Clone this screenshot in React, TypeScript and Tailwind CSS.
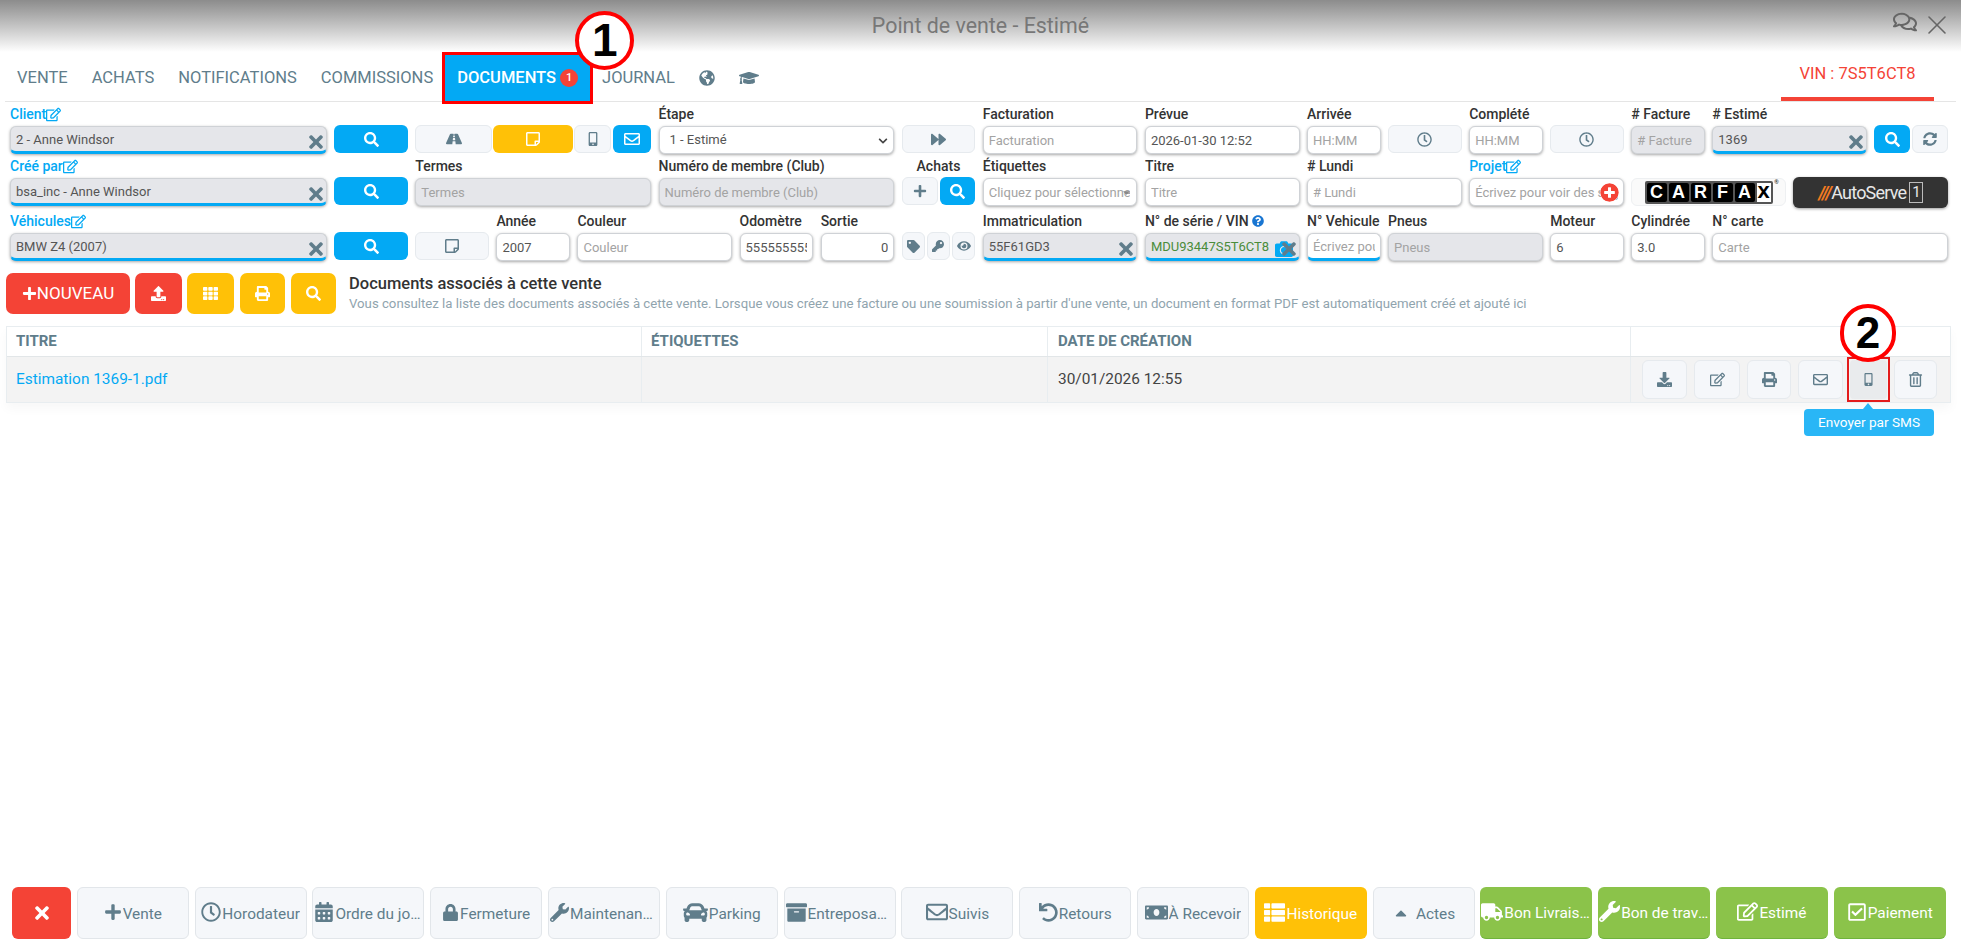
import type { ReactNode } from 'react';
import { X } from 'lucide-react';
import {
    FaArchive, FaCalendarAlt, FaCamera, FaCar, FaCaretDown, FaCaretUp, FaChevronDown, FaDownload, FaEye, FaForward,
    FaGlobeAmericas, FaGraduationCap, FaKey, FaLock, FaMobileAlt, FaMoneyBill, FaPlus, FaPlusCircle,
    FaPrint, FaQuestionCircle, FaRegCheckSquare, FaRegClock, FaRegComments, FaRegEdit, FaRegEnvelope,
    FaRegStickyNote, FaRegTrashAlt, FaRoad, FaSearch, FaSyncAlt, FaTag, FaTh, FaThList, FaTimes, FaTruck, FaUndo,
    FaUpload, FaWrench,
} from 'react-icons/fa';

const ghostBtn = 'flex items-center justify-center rounded-[6px] border border-[#e6eaee] bg-[#f5f7fa] text-[#607d8b]';
const blueBtn = 'flex items-center justify-center rounded-[6px] bg-[#03a9f4] text-white';
const inputBase = 'block h-[28px] w-full rounded-[6px] border border-[#cfd2d6] px-[5px] text-[13px] shadow-[0_1px_3px_rgba(0,0,0,0.35)] outline-none placeholder:text-[#a3a3a3]';

function Label({ children, link }: { children?: ReactNode, link?: boolean }) {
    if (link) {
        return (
            <div className="flex h-[24px] items-center text-[14px] font-medium text-[#03a9f4]">
                {children}
                <FaRegEdit size={15} />
            </div>
        );
    }
    return <div className="flex h-[24px] items-center whitespace-nowrap text-[14px] font-medium text-[#333]">{children}</div>;
}

function Field({ span, label, link, value, placeholder, disabled, picker, align }: {
    span: string,
    label?: ReactNode,
    link?: boolean,
    value?: string,
    placeholder?: string,
    disabled?: boolean,
    picker?: boolean,
    align?: string,
}) {
    const bg = disabled || picker ? 'bg-[#e5e6ea]' : 'bg-white';
    return (
        <div className={span}>
            <Label link={link}>{label}</Label>
            <div className="relative">
                <input
                    readOnly
                    defaultValue={value}
                    placeholder={placeholder}
                    className={`${inputBase} ${bg} ${align ?? ''} text-[#555] ${picker ? 'border-b-[3px] border-b-[#03a9f4]' : ''}`}
                />
                {picker && <FaTimes size={20} className="absolute right-[1px] top-[6px] text-[#607d8b]" />}
            </div>
        </div>
    );
}

function Btn({ span, children, className, label }: { span: string, children: ReactNode, className: string, label?: string }) {
    return (
        <div className={span}>
            <Label>{label}</Label>
            <div className={`-mt-px h-[28px] ${className}`}>{children}</div>
        </div>
    );
}

function Carfax() {
    return (
        <div className="relative flex h-[23px] w-[128px] items-center gap-[2px] rounded-[2px] bg-[#555] px-[2px] font-['Liberation_Sans',sans-serif] text-[18px] font-bold leading-none">
            {['C', 'A', 'R', 'F', 'A'].map((l, i) => (
                <span key={i} className="flex h-[19px] w-[20px] items-center justify-center rounded-[2px] bg-black text-white">{l}</span>
            ))}
            <span className="flex h-[19px] flex-1 items-end justify-center bg-white text-[22px] text-black">x</span>
            <span className="absolute right-[-6px] top-[-2px] text-[6px] text-[#333]">®</span>
        </div>
    );
}

function BottomBtn({ icon, text, className }: { icon: ReactNode, text: string, className?: string }) {
    return (
        <button className={`flex h-[52px] w-[112px] items-center justify-center gap-px rounded-[6px] px-[1px] text-[15.4px] ${className ?? 'border border-[#e2e6ea] bg-[#f5f7fa] text-[#607d8b]'}`}>
            <span className="-mt-[2px] shrink-0">{icon}</span>
            <span className="truncate pt-[3px]">{text}</span>
        </button>
    );
}

const green = 'bg-[#8bc34a] text-white border-b border-[#6fb33c]';

export default function App() {
    return (
        <div className="relative flex h-screen flex-col overflow-hidden bg-white font-[Roboto,sans-serif]">
            {/* title bar */}
            <div className="relative flex h-[52px] shrink-0 items-center justify-center bg-gradient-to-b from-[#8c8c8c] to-white text-[21.4px] text-[#777]">
                Point de vente - Estimé
                <div className="absolute right-[8px] top-[9px] flex items-center gap-[4px] text-[#666]">
                    <FaRegComments size={24} className="-mt-[6px]" />
                    <X size={32} strokeWidth={1.2} />
                </div>
            </div>

            {/* tabs */}
            <div className="mx-[5px] flex h-[50px] shrink-0 items-end border-b border-[#e5e5e5] text-[16.5px] text-[#607d8b]">
                <div className="flex h-[46px] items-center px-[12px]">VENTE</div>
                <div className="flex h-[46px] items-center px-[12px]">ACHATS</div>
                <div className="flex h-[46px] items-center px-[12px]">NOTIFICATIONS</div>
                <div className="flex h-[46px] items-center px-[12px]">COMMISSIONS</div>
                <div className="relative flex h-[46px] items-center gap-[4px] bg-[#03a9f4] px-[12px] font-medium text-white outline outline-[3px] outline-[#f00]">
                    DOCUMENTS
                    <span className="flex h-[18px] w-[18px] items-center justify-center rounded-full bg-[#f44336] text-[11px]">1</span>
                    <span className="absolute left-[130px] top-[-44px] z-10 flex h-[59px] w-[59px] items-center justify-center rounded-full border-[4px] border-[#f00] bg-white font-['Liberation_Sans',sans-serif] text-[46px] font-bold text-black">1</span>
                </div>
                <div className="flex h-[46px] items-center px-[12px]">JOURNAL</div>
                <div className="flex h-[46px] items-center px-[12px]"><FaGlobeAmericas size={16} /></div>
                <div className="flex h-[46px] items-center px-[12px]"><FaGraduationCap size={20} /></div>
                <div className="ml-auto mr-[22px] flex h-[50px] w-[153px] items-center justify-center border-b-[4px] border-[#f44336] text-[#f44336]">VIN : 7S5T6CT8</div>
            </div>

            {/* form */}
            <div className="grid shrink-0 grid-cols-24 gap-x-[7.5px] pl-[10px] pr-[13px]">
                <Field span="col-span-4" label="Client" link value="2 - Anne Windsor" picker />
                <Btn span="col-span-1" className={blueBtn}><FaSearch size={15} /></Btn>
                <div className="col-span-3">
                    <Label />
                    <div className="-mt-px flex h-[28px] gap-px">
                        <div className={`${ghostBtn} w-[77px]`}><FaRoad size={16} /></div>
                        <div className="flex w-[80px] items-center justify-center rounded-[6px] bg-[#ffc107] text-white"><FaRegStickyNote size={16} /></div>
                        <div className={`${ghostBtn} w-[37px]`}><FaMobileAlt size={14} /></div>
                        <div className={`${blueBtn} ml-px w-[38px]`}><FaRegEnvelope size={16} /></div>
                    </div>
                </div>
                <div className="col-span-3">
                    <Label>Étape</Label>
                    <div className={`${inputBase} relative flex items-center bg-white pl-[10px] text-[#555]`}>
                        1 - Estimé
                        <FaChevronDown size={10} className="absolute right-[5px] top-[9px] text-[#444]" />
                    </div>
                </div>
                <Btn span="col-span-1" className={ghostBtn}><FaForward size={15} /></Btn>
                <Field span="col-span-2" label="Facturation" placeholder="Facturation" />
                <Field span="col-span-2" label="Prévue" value="2026-01-30 12:52" />
                <Field span="col-span-1" label="Arrivée" placeholder="HH:MM" />
                <Btn span="col-span-1" className={ghostBtn}><FaRegClock size={15} /></Btn>
                <Field span="col-span-1" label="Complété" placeholder="HH:MM" />
                <Btn span="col-span-1" className={ghostBtn}><FaRegClock size={15} /></Btn>
                <Field span="col-span-1" label="# Facture" placeholder="# Facture" disabled />
                <Field span="col-span-2" label="# Estimé" value="1369" picker />
                <div className="col-span-1">
                    <Label />
                    <div className="-mt-px flex h-[28px] gap-[2px]">
                        <div className={`${blueBtn} w-[36px]`}><FaSearch size={15} /></div>
                        <div className={`${ghostBtn} flex-1`}><FaSyncAlt size={14} /></div>
                    </div>
                </div>

                <Field span="col-span-4" label="Créé par" link value="bsa_inc - Anne Windsor" picker />
                <Btn span="col-span-1" className={blueBtn}><FaSearch size={15} /></Btn>
                <Field span="col-span-3" label="Termes" placeholder="Termes" disabled />
                <Field span="col-span-3" label="Numéro de membre (Club)" placeholder="Numéro de membre (Club)" disabled />
                <div className="col-span-1">
                    <div className="flex h-[24px] items-center justify-center text-[14px] font-medium text-[#333]">Achats</div>
                    <div className="-mt-px flex h-[28px] gap-[2px]">
                        <div className={`${ghostBtn} w-[36px]`}><FaPlus size={14} /></div>
                        <div className={`${blueBtn} flex-1`}><FaSearch size={15} /></div>
                    </div>
                </div>
                <div className="col-span-2">
                    <Label>Étiquettes</Label>
                    <div className="relative">
                        <input readOnly placeholder="Cliquez pour sélectionner" className={`${inputBase} bg-white pr-[6px] text-[#555]`} />
                        <FaCaretDown size={11} className="absolute right-[5px] top-[9px] text-[#888]" />
                    </div>
                </div>
                <Field span="col-span-2" label="Titre" placeholder="Titre" />
                <Field span="col-span-2" label="# Lundi" placeholder="# Lundi" />
                <div className="col-span-2">
                    <Label link>Projet</Label>
                    <div className="relative">
                        <input readOnly placeholder="Écrivez pour voir des suggestions" className={`${inputBase} bg-white text-[#555]`} />
                        <FaPlusCircle size={19} className="absolute right-[5px] top-[5px] rounded-full bg-white text-[#f44336]" />
                    </div>
                </div>
                <div className="col-span-2">
                    <Label />
                    <div className={`${ghostBtn} h-[28px] border-[#eef0f2] bg-[#fafafa]`}><Carfax /></div>
                </div>
                <div className="col-span-2">
                    <Label />
                    <div className="-mt-[1px] flex h-[31px] items-center justify-center rounded-[6px] bg-[#333] text-[18px] tracking-[-0.8px] text-[#e8e8e8] shadow-[0_1px_3px_rgba(0,0,0,0.4)]">
                        <span className="font-bold italic text-[#f47b20]">///</span>
                        <span>AutoServe</span>
                        <span className="ml-[3px] border border-[#bbb] px-[2px] text-[15px] leading-[19px]">1</span>
                    </div>
                </div>
            </div>
            <div className="mt-[1px] grid shrink-0 grid-cols-24 gap-x-[7.5px] pl-[10px] pr-[13px]">
                <Field span="col-span-4" label="Véhicules" link value="BMW Z4 (2007)" picker />
                <Btn span="col-span-1" className={blueBtn}><FaSearch size={15} /></Btn>
                <Btn span="col-span-1" className={ghostBtn}><FaRegStickyNote size={16} /></Btn>
                <Field span="col-span-1" label="Année" value="2007" />
                <Field span="col-span-2" label="Couleur" placeholder="Couleur" />
                <Field span="col-span-1" label="Odomètre" value="555555555555" />
                <Field span="col-span-1" label="Sortie" value="0" align="text-right" />
                <div className="col-span-1">
                    <Label />
                    <div className="-mt-px flex h-[28px] gap-[2px]">
                        <div className={`${ghostBtn} flex-1`}><FaTag size={13} /></div>
                        <div className={`${ghostBtn} flex-1`}><FaKey size={12} /></div>
                        <div className={`${ghostBtn} flex-1`}><FaEye size={14} /></div>
                    </div>
                </div>
                <Field span="col-span-2" label="Immatriculation" value="55F61GD3" picker />
                <div className="col-span-2">
                    <Label>
                        N° de série / VIN
                        <FaQuestionCircle size={12} className="ml-[3px] text-[#1976d2]" />
                    </Label>
                    <div className="relative">
                        <input readOnly defaultValue="MDU93447S5T6CT8" className={`${inputBase} border-b-[3px] border-b-[#03a9f4] bg-[#e5e6ea] text-[#4a8c3a]`} />
                        <FaCamera size={18} className="absolute right-[7px] top-[7px] text-[#03a9f4]" />
                        <FaTimes size={20} className="absolute right-[1px] top-[6px] text-[#607d8b]" />
                    </div>
                </div>
                <div className="col-span-1">
                    <Label>N° Vehicule</Label>
                    <input readOnly placeholder="Écrivez pour voir" className={`${inputBase} border-b-[3px] border-b-[#03a9f4] bg-white text-[#555]`} />
                </div>
                <Field span="col-span-2" label="Pneus" placeholder="Pneus" disabled />
                <Field span="col-span-1" label="Moteur" value="6" />
                <Field span="col-span-1" label="Cylindrée" value="3.0" />
                <Field span="col-span-3" label="N° carte" placeholder="Carte" />
            </div>

            {/* documents toolbar */}
            <div className="mt-[12px] flex h-[41px] shrink-0 items-stretch pl-[6px]">
                <button className="flex h-[41px] w-[124px] items-center justify-center rounded-[7px] bg-[#f44336] text-[17px] text-white">
                    <FaPlus size={15} />NOUVEAU
                </button>
                <button className="ml-[5px] flex h-[41px] w-[47px] items-center justify-center rounded-[7px] bg-[#f44336] text-white"><FaUpload size={15} /></button>
                <button className="ml-[5px] flex h-[41px] w-[47px] items-center justify-center rounded-[7px] bg-[#ffc107] text-white"><FaTh size={15} /></button>
                <button className="ml-[6px] flex h-[41px] w-[45px] items-center justify-center rounded-[7px] bg-[#ffc107] text-white"><FaPrint size={15} /></button>
                <button className="ml-[6px] flex h-[41px] w-[45px] items-center justify-center rounded-[7px] bg-[#ffc107] text-white"><FaSearch size={15} /></button>
                <div className="ml-[13px] min-w-0">
                    <div className="text-[16.5px] font-medium leading-[21px] text-[#333]">Documents associés à cette vente</div>
                    <div className="whitespace-nowrap text-[13.2px] leading-[20px] text-[#90a4ae]">
                        Vous consultez la liste des documents associés à cette vente. Lorsque vous créez une facture ou une soumission à partir d'une vente, un document en format PDF est automatiquement créé et ajouté ici
                    </div>
                </div>
            </div>

            {/* documents table */}
            <div className="ml-[6px] mr-[10px] mt-[12px] shrink-0 border border-[#e8edf0] shadow-[0_6px_10px_rgba(0,0,0,0.03)]">
                <div className="grid h-[30px] grid-cols-[635px_406px_583px_1fr] border-b border-[#e2e6e8] text-[15px] font-bold text-[#607d8b]">
                    <div className="flex items-center border-r border-[#e8edf0] px-[9px]">TITRE</div>
                    <div className="flex items-center border-r border-[#e8edf0] px-[9px]">ÉTIQUETTES</div>
                    <div className="flex items-center border-r border-[#e8edf0] px-[10px]">DATE DE CRÉATION</div>
                    <div />
                </div>
                <div className="grid h-[45px] grid-cols-[635px_406px_583px_1fr] bg-[#f3f3f3] text-[15.4px]">
                    <div className="flex items-center border-r border-[#e8edf0] px-[9px] text-[#03a9f4]">Estimation 1369-1.pdf</div>
                    <div className="border-r border-[#e8edf0]" />
                    <div className="flex items-center border-r border-[#e8edf0] px-[10px] text-[#444]">30/01/2026 12:55</div>
                    <div className="flex items-center justify-end gap-[7px] pr-[13px]">
                        <div className={`${ghostBtn} h-[39px] w-[45px]`}><FaDownload size={15} /></div>
                        <div className={`${ghostBtn} h-[39px] w-[46px]`}><FaRegEdit size={15} /></div>
                        <div className={`${ghostBtn} h-[39px] w-[44px]`}><FaPrint size={15} /></div>
                        <div className={`${ghostBtn} h-[39px] w-[45px]`}><FaRegEnvelope size={15} /></div>
                        <div className="relative flex h-[39px] w-[37px] items-center justify-center rounded-[4px] bg-[#e9ebed] text-[#607d8b]">
                            <FaMobileAlt size={13} />
                            <span className="absolute -inset-[3px] border-2 border-[#e31b1b]" />
                            <span className="absolute left-[-10px] top-[-56px] z-10 flex h-[58px] w-[56px] items-center justify-center rounded-full border-[4px] border-[#f00] bg-white font-['Liberation_Sans',sans-serif] text-[44px] font-bold text-black">2</span>
                            <span className="absolute left-[-46px] top-[49px] z-10 flex h-[27px] w-[130px] items-center justify-center rounded-[4px] bg-[#29b6f6] text-[13.6px] text-white">Envoyer par SMS</span>
                            <span className="absolute left-[13px] top-[43px] z-10 h-0 w-0 border-x-[5px] border-b-[6px] border-x-transparent border-b-[#29b6f6]" />
                        </div>
                        <div className={`${ghostBtn} h-[39px] w-[43px]`}><FaRegTrashAlt size={15} /></div>
                    </div>
                </div>
            </div>

            {/* bottom actions */}
            <div className="mt-auto flex shrink-0 gap-[5.8px] pb-[9px] pl-[12px]">
                <button className="flex h-[52px] w-[59px] items-center justify-center rounded-[6px] bg-[#f44336] text-white"><FaTimes size={20} /></button>
                <BottomBtn icon={<FaPlus size={18} />} text="Vente" />
                <BottomBtn icon={<FaRegClock size={20} />} text="Horodateur" />
                <BottomBtn icon={<FaCalendarAlt size={20} />} text="Ordre du jour" />
                <BottomBtn icon={<FaLock size={17} />} text="Fermeture" />
                <BottomBtn icon={<FaWrench size={19} />} text="Maintenance" />
                <BottomBtn icon={<FaCar size={25} />} text="Parking" />
                <BottomBtn icon={<FaArchive size={21} />} text="Entreposage" />
                <BottomBtn icon={<FaRegEnvelope size={22} />} text="Suivis" />
                <BottomBtn icon={<FaUndo size={19} />} text="Retours" />
                <BottomBtn icon={<FaMoneyBill size={23} />} text="À Recevoir" />
                <BottomBtn icon={<FaThList size={21} />} text="Historique" className="bg-[#ffc107] text-white" />
                <button className="flex h-[52px] w-[102px] items-center justify-center gap-[6px] rounded-[6px] border border-[#e2e6ea] bg-[#f5f7fa] text-[15.4px] text-[#607d8b]">
                    <FaCaretUp size={18} /><span className="pt-[3px]">Actes</span>
                </button>
                <BottomBtn icon={<FaTruck size={22} />} text="Bon Livraison" className={green} />
                <BottomBtn icon={<FaWrench size={21} />} text="Bon de travail" className={green} />
                <BottomBtn icon={<FaRegEdit size={21} />} text="Estimé" className={green} />
                <BottomBtn icon={<FaRegCheckSquare size={20} />} text="Paiement" className={green} />
            </div>
        </div>
    );
}
